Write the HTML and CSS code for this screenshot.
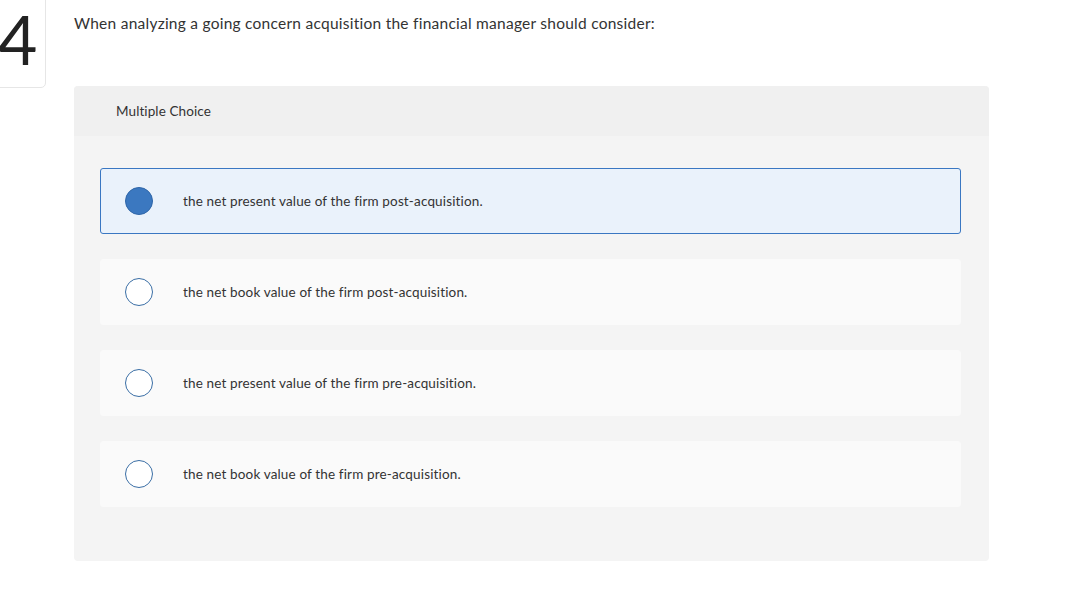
FILE: index.html
```html
<!DOCTYPE html>
<html lang="en">
<head>
    <meta charset="UTF-8">
    <title>Question 4</title>
    <link rel="stylesheet" href="styles.css">
</head>
<body>
    <div class="question">
        <div class="question-number">4</div>

        <div class="question-body">
            <div class="prompt">When analyzing a going concern acquisition the financial manager should consider:</div>

            <div class="panel">
                <div class="panel-header">Multiple Choice</div>
                <div class="choices">
                    <div class="choice selected">
                        <span class="radio"></span>
                        <span class="choice-text">the net present value of the firm post-acquisition.</span>
                    </div>
                    <div class="choice">
                        <span class="radio"></span>
                        <span class="choice-text">the net book value of the firm post-acquisition.</span>
                    </div>
                    <div class="choice">
                        <span class="radio"></span>
                        <span class="choice-text">the net present value of the firm pre-acquisition.</span>
                    </div>
                    <div class="choice">
                        <span class="radio"></span>
                        <span class="choice-text">the net book value of the firm pre-acquisition.</span>
                    </div>
                </div>
            </div>
        </div>
    </div>
</body>
</html>
```

FILE: styles.css
```css
* {
    margin: 0;
    padding: 0;
    box-sizing: border-box;
}

body {
    font-family: Lato, "Open Sans", sans-serif;
    color: #333;
    background: #fff;
    overflow: hidden;
}

.question {
    display: flex;
    align-items: flex-start;
}

.question-number {
    width: 76px;
    height: 98px;
    margin-left: -30px;
    margin-top: -10px;
    border: 1px solid #e6e6e6;
    border-radius: 0 0 5px 0;
    font-size: 68px;
    line-height: 1;
    color: #222;
    padding-top: 14px;
    text-indent: 27px;
    font-weight: 400;
}

.question-body {
    margin-left: 28px;
}

.prompt {
    font-size: 15.5px;
    letter-spacing: 0.25px;
    line-height: 20px;
    padding-top: 13px;
    color: #333;
}

.panel {
    margin-top: 53px;
    width: 915px;
    background: #f4f4f4;
    border-radius: 4px;
    padding-bottom: 54px;
}

.panel-header {
    height: 50px;
    background: #f0f0f0;
    border-radius: 4px 4px 0 0;
    padding-left: 42px;
    font-size: 13.5px;
    letter-spacing: 0.1px;
    line-height: 50px;
    color: #333;
}

.choices {
    padding: 32px 28px 0 26px;
    display: flex;
    flex-direction: column;
    gap: 25px;
}

.choice {
    height: 66px;
    display: flex;
    align-items: center;
    background: #fafafa;
    border: 1px solid #fafafa;
    border-radius: 3px;
    padding-left: 24px;
}

.choice.selected {
    background: #eaf2fb;
    border-color: #3a77c2;
}

.radio {
    width: 28px;
    height: 28px;
    border-radius: 50%;
    border: 1.5px solid #3a6ea5;
    background: #fff;
    flex-shrink: 0;
}

.choice.selected .radio {
    background: #3b78c0;
    border-color: #2f66a8;
}

.choice-text {
    margin-left: 30px;
    font-size: 13.5px;
    letter-spacing: 0.15px;
}
```
